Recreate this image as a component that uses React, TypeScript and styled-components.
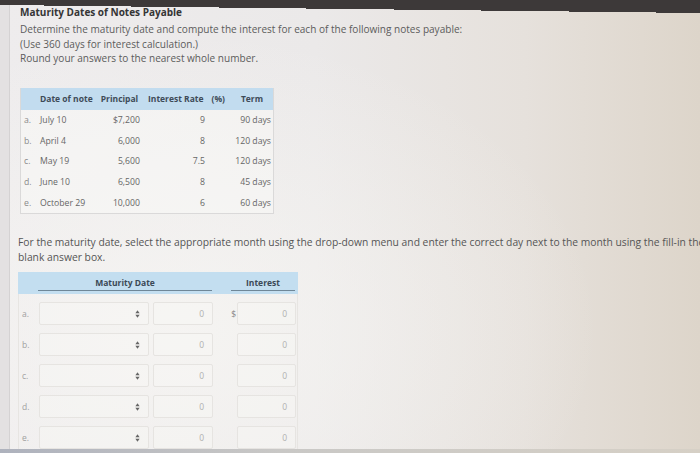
import React from "react";
import styled, { createGlobalStyle } from "styled-components";

const GlobalStyle = createGlobalStyle`
  html, body { margin: 0; padding: 0; }
  body {
    width: 700px;
    height: 453px;
    overflow: hidden;
    font-family: "Open Sans", "Liberation Sans", sans-serif;
    background: #ecebea;
  }
`;

const Page = styled.div`
  position: relative;
  width: 700px;
  height: 453px;
  display: flex;
  flex-direction: column;
  overflow: hidden;
  background:
    radial-gradient(ellipse 420px 300px at 180px 330px, rgba(248, 247, 244, 0.75), rgba(248, 247, 244, 0) 100%),
    linear-gradient(to right, #eeeced 0%, #ebe9e9 45%, #e6e1dc 75%, #ddd5ca 100%);
`;

const TopBar = styled.div`
  flex: none;
  height: 5px;
  background: #3d3939;
`;

const Slant = styled.div`
  position: absolute;
  top: 5px;
  left: 0;
  width: 700px;
  height: 8px;
  background: linear-gradient(to top right, rgba(61, 57, 57, 0) 50%, #3d3939 50%);
`;

const BottomEdge = styled.div`
  position: absolute;
  left: 0;
  bottom: 0;
  width: 700px;
  height: 4px;
  background: linear-gradient(to right, #aeb2bd 0%, #c9c8c6 40%, #d6d0c6 100%);
`;

const Body = styled.div`
  flex: 1;
  display: flex;
`;

const LeftRail = styled.div`
  flex: none;
  width: 9px;
  background: #e3e1e2;
  border-right: 1px solid #d4d2d3;
`;

const Content = styled.div`
  flex: 1;
  display: flex;
  flex-direction: column;
  padding-left: 10px;
`;

const Title = styled.div`
  font-size: 10px;
  line-height: 13px;
  font-weight: 700;
  color: #353535;
  margin-top: 1px;
`;

const Intro = styled.div`
  margin-top: 3px;
  font-size: 10.05px;
  line-height: 14.5px;
  color: #5c5c5c;
`;

const NotesTable = styled.div`
  margin-top: 22px;
  width: 252px;
  border: 1px solid #dad9d9;
  border-top: none;
  display: grid;
  grid-template-columns: 76px 45px 89px 42px;
  font-size: 8.7px;
  color: #666;
`;

const HeadCell = styled.div<{ $align?: string; $pad?: number }>`
  height: 22px;
  display: flex;
  align-items: center;
  justify-content: ${(p) => p.$align || "center"};
  padding-left: ${(p) => p.$pad || 0}px;
  background: #c2dcef;
  font-weight: 700;
  font-size: 8.5px;
  color: #3e4b58;
  white-space: nowrap;
`;

const Pct = styled.span`
  margin-left: 8px;
`;

const Cell = styled.div<{ $right?: number }>`
  height: 20.8px;
  display: flex;
  align-items: center;
  justify-content: ${(p) => (p.$right !== undefined ? "flex-end" : "flex-start")};
  padding-right: ${(p) => p.$right || 0}px;
  padding-left: ${(p) => (p.$right !== undefined ? 0 : 3)}px;
  background: rgba(250, 250, 249, 0.45);
  white-space: nowrap;
`;

const RowLabel = styled.span`
  width: 16px;
  color: #8a8a8a;
`;

const Instruction = styled.div`
  margin-top: 21px;
  margin-left: -2px;
  font-size: 10.3px;
  line-height: 15px;
  color: #555;
  white-space: nowrap;
`;

const AnswerTable = styled.div`
  margin-top: 7px;
  margin-left: -2px;
  width: 280px;
  display: flex;
  flex-direction: column;
`;

const AnswerGrid = styled.div`
  display: grid;
  grid-template-columns: 20px 110px 64px 24px 59px;
  padding-right: 3px;
`;

const AnswerHead = styled(AnswerGrid)`
  height: 22px;
  background: #c3def0;
  align-items: end;
`;

const HeadLabel = styled.div<{ $col: string; $offset?: number }>`
  grid-column: ${(p) => p.$col};
  margin-left: ${(p) => p.$offset || 0}px;
  margin-bottom: 3px;
  padding-bottom: 1px;
  border-bottom: 1.5px solid #6f8798;
  text-align: center;
  font-size: 8.5px;
  line-height: 12px;
  font-weight: 700;
  color: #3b4956;
`;

const AnswerBody = styled.div`
  display: flex;
  flex-direction: column;
  gap: 8px;
  padding: 8px 0 10px;
  border-left: 1px solid #e7e5e2;
  border-right: 1px solid #e7e5e2;
`;

const AnswerRow = styled(AnswerGrid)`
  height: 23px;
  align-items: stretch;
`;

const Letter = styled.div`
  display: flex;
  align-items: center;
  padding-left: 3px;
  font-size: 8.5px;
  color: #a0a0a0;
`;

const Box = styled.div`
  border: 1px solid #e6e4e1;
  border-radius: 2px;
  background: rgba(250, 249, 247, 0.35);
  display: flex;
  align-items: center;
  justify-content: flex-end;
  padding-right: 8px;
  font-size: 8.5px;
  color: #b0b0b0;
`;

const DayBox = styled(Box)`
  margin-left: 4px;
`;

const Dollar = styled.div`
  display: flex;
  align-items: center;
  justify-content: flex-end;
  padding-right: 1px;
  font-size: 8.5px;
  color: #888;
`;

const SortIcon = () => (
  <svg width="5" height="8" viewBox="0 0 5 8">
    <path d="M2.5 0.3 L4.6 3.2 L0.4 3.2 Z" fill="#666" />
    <path d="M2.5 7.7 L4.6 4.8 L0.4 4.8 Z" fill="#666" />
  </svg>
);

const notes = [
  { l: "a.", date: "July 10", p: "$7,200", r: "9", t: "90 days" },
  { l: "b.", date: "April 4", p: "6,000", r: "8", t: "120 days" },
  { l: "c.", date: "May 19", p: "5,600", r: "7.5", t: "120 days" },
  { l: "d.", date: "June 10", p: "6,500", r: "8", t: "45 days" },
  { l: "e.", date: "October 29", p: "10,000", r: "6", t: "60 days" },
];

export default function App() {
  return (
    <Page>
      <GlobalStyle />
      <TopBar />
      <Body>
        <LeftRail />
        <Content>
          <Title>Maturity Dates of Notes Payable</Title>
          <Intro>
            Determine the maturity date and compute the interest for each of the following notes payable:
            <br />
            (Use 360 days for interest calculation.)
            <br />
            Round your answers to the nearest whole number.
          </Intro>
          <NotesTable>
            <HeadCell $align="flex-start" $pad={19}>Date of note</HeadCell>
            <HeadCell>Principal</HeadCell>
            <HeadCell>
              Interest Rate<Pct>(%)</Pct>
            </HeadCell>
            <HeadCell>Term</HeadCell>
            {notes.map((n) => (
              <React.Fragment key={n.l}>
                <Cell>
                  <RowLabel>{n.l}</RowLabel>
                  {n.date}
                </Cell>
                <Cell $right={2}>{n.p}</Cell>
                <Cell $right={26}>{n.r}</Cell>
                <Cell $right={2}>{n.t}</Cell>
              </React.Fragment>
            ))}
          </NotesTable>
          <Instruction>
            For the maturity date, select the appropriate month using the drop-down menu and enter the correct day next to the month using the fill-in the
            <br />
            blank answer box.
          </Instruction>
          <AnswerTable>
            <AnswerHead>
              <HeadLabel $col="2 / 4">Maturity Date</HeadLabel>
              <HeadLabel $col="4 / 6" $offset={19}>Interest</HeadLabel>
            </AnswerHead>
            <AnswerBody>
              {notes.map((n, i) => (
                <AnswerRow key={n.l}>
                  <Letter>{n.l}</Letter>
                  <Box>
                    <SortIcon />
                  </Box>
                  <DayBox>0</DayBox>
                  <Dollar>{i === 0 ? "$" : ""}</Dollar>
                  <Box>0</Box>
                </AnswerRow>
              ))}
            </AnswerBody>
          </AnswerTable>
        </Content>
      </Body>
      <Slant />
      <BottomEdge />
    </Page>
  );
}
